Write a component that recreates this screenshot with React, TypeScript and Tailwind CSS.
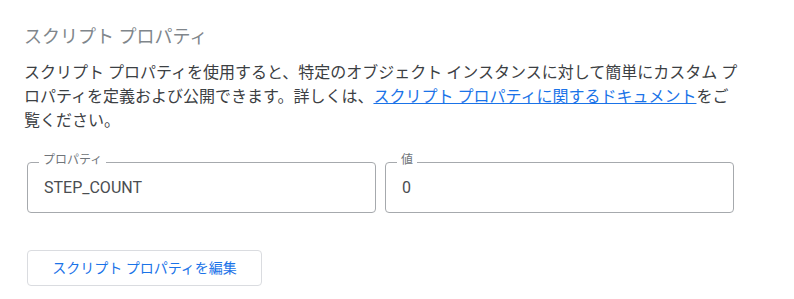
const font = { fontFamily: "Roboto, 'Noto Sans CJK JP', sans-serif" };

function OutlinedField({ label, value }: { label: string; value: string }) {
  return (
    <div className="relative flex h-[51px] w-[349px] items-center rounded border border-[#a6a9ad] px-4">
      <span className="absolute -top-[10px] left-[11px] bg-white px-1 text-[12px] leading-[14px] text-[#70757a]">
        {label}
      </span>
      <input
        readOnly
        value={value}
        className="w-full bg-transparent text-[16px] text-[#4a4d51] outline-none"
      />
    </div>
  );
}

export default function App() {
  return (
    <div className="min-h-screen bg-white px-6 pt-[25px]" style={font}>
      <h2 className="text-[18px] leading-6 text-[#80868b]">スクリプト プロパティ</h2>
      <p className="mt-3 w-[720px] text-[16px] leading-6 text-[#3c4043]">
        スクリプト プロパティを使用すると、特定のオブジェクト インスタンスに対して簡単にカスタム プロパティを定義および公開できます。詳しくは、
        <a href="#" className="text-[#1a73e8] underline">
          スクリプト プロパティに関するドキュメント
        </a>
        をご覧ください。
      </p>

      <div className="ml-[3px] mt-[29px] flex gap-[9px]">
        <OutlinedField label="プロパティ" value="STEP_COUNT" />
        <OutlinedField label="値" value="0" />
      </div>

      <button className="ml-[3px] mt-[37px] h-9 w-[235px] rounded border border-[#dadce0] bg-white text-[14px] text-[#1a73e8]">
        スクリプト プロパティを編集
      </button>
    </div>
  );
}
